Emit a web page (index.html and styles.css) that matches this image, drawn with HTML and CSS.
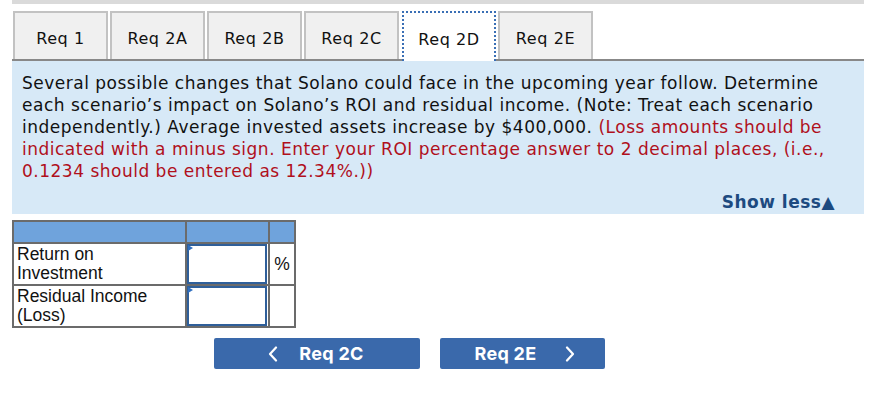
FILE: index.html
```html
<!DOCTYPE html>
<html>
<head>
<meta charset="utf-8">
<link rel="stylesheet" href="styles.css">
</head>
<body>
<div class="page">
  <div class="topbar"></div>
  <div class="tabs">
    <div class="tab">Req 1</div>
    <div class="tab">Req 2A</div>
    <div class="tab">Req 2B</div>
    <div class="tab">Req 2C</div>
    <div class="tab active">Req 2D</div>
    <div class="tab">Req 2E</div>
  </div>
  <div class="panel">
    <p class="prompt">Several possible changes that Solano could face in the upcoming year follow. Determine each scenario’s impact on Solano’s ROI and residual income. (Note: Treat each scenario independently.) Average invested assets increase by $400,000. <span class="red">(Loss amounts should be indicated with a minus sign. Enter your ROI percentage answer to 2 decimal places, (i.e., 0.1234 should be entered as 12.34%.))</span></p>
    <div class="showless">Show less<span class="tri">▲</span></div>
  </div>
  <table class="grid">
    <tr class="head"><th class="c1"></th><th class="c2"></th><th class="c3"></th></tr>
    <tr>
      <td class="c1">Return on<br>Investment</td>
      <td class="c2"><div class="inp"><span class="flag"></span></div></td>
      <td class="c3">%</td>
    </tr>
    <tr>
      <td class="c1">Residual Income<br>(Loss)</td>
      <td class="c2"><div class="inp"><span class="flag"></span></div></td>
      <td class="c3"></td>
    </tr>
  </table>
  <div class="nav">
    <div class="btn prev"><svg class="chev" width="10" height="16" viewBox="0 0 10 16"><path d="M8 1.5 L2 8 L8 14.5" fill="none" stroke="#fff" stroke-width="2.2" stroke-linecap="round" stroke-linejoin="round"/></svg><span>Req 2C</span></div>
    <div class="btn next"><span>Req 2E</span><svg class="chev" width="10" height="16" viewBox="0 0 10 16"><path d="M2 1.5 L8 8 L2 14.5" fill="none" stroke="#fff" stroke-width="2.2" stroke-linecap="round" stroke-linejoin="round"/></svg></div>
  </div>
</div>
</body>
</html>
```
FILE: styles.css
```css
html, body { margin: 0; padding: 0; background: #fff; }
.page { margin-left: 12px; width: 852px; font-family: "DejaVu Sans", Verdana, sans-serif; }
.topbar { height: 4px; background: #dadada; }
.tabs { display: flex; gap: 2px; padding: 7px 0 0 1px; border-bottom: 2px solid #888; height: 48px; }
.tab { box-sizing: border-box; width: 95px; height: 48px; background: #f0f0f0; border: 2px solid #c2c2c2; border-bottom: none; display: flex; align-items: center; justify-content: center; font-size: 16px; letter-spacing: 0.6px; color: #111; padding-top: 4px; }
.tab.active { background: #fff; border: 2px dotted #3a6fb5; border-bottom: none; height: 50px; margin-bottom: -2px; width: 94px; margin-left: 1px; }
.panel { background: #d7e9f7; padding: 11px 10px 2px 10px; }
.prompt { margin: 0; font-size: 17px; letter-spacing: 0.5px; line-height: 22px; color: #111; }
.red { color: #b0101c; }
.showless { margin: 10px 19px 0 0; text-align: right; font-weight: bold; font-size: 17px; letter-spacing: 0.5px; color: #1d4a80; line-height: 20px; }
.tri { font-size: 17px; margin-left: 0; }
.grid { border-collapse: collapse; margin-top: 6px; font-family: "Liberation Sans", Arial, sans-serif; font-size: 17.5px; color: #111; }
.grid th, .grid td { border: 2px solid #6b6b6b; padding: 0; }
.grid .head th { background: #6fa3dc; height: 20px; }
.grid td { height: 40px; }
.c1 { width: 168px; padding-left: 3px !important; line-height: 19px; vertical-align: middle; }
.c2 { width: 81px; }
.c3 { width: 24px; text-align: center; }
.inp { position: relative; box-sizing: border-box; height: 40px; border: 2px solid #2f5f9a; background: #fff; margin: 0 1px 0 0; }
.flag { position: absolute; left: -1px; top: -1px; width: 0; height: 0; border-top: 3px solid transparent; border-bottom: 3px solid transparent; border-left: 5px solid #2f6fc0; }
.nav { display: flex; gap: 20px; margin: 10px 0 0 202px; }
.btn { height: 31px; background: #3a69ab; border-radius: 2px; color: #fff; font-family: Inter, Roboto, sans-serif; font-weight: 700; font-size: 18px; letter-spacing: 0.3px; display: flex; align-items: center; justify-content: center; box-sizing: border-box; }
.prev { width: 206px; gap: 21px; padding-right: 2px; }
.next { width: 165px; gap: 28px; padding-left: 4px; }
.chev { display: block; }
```
